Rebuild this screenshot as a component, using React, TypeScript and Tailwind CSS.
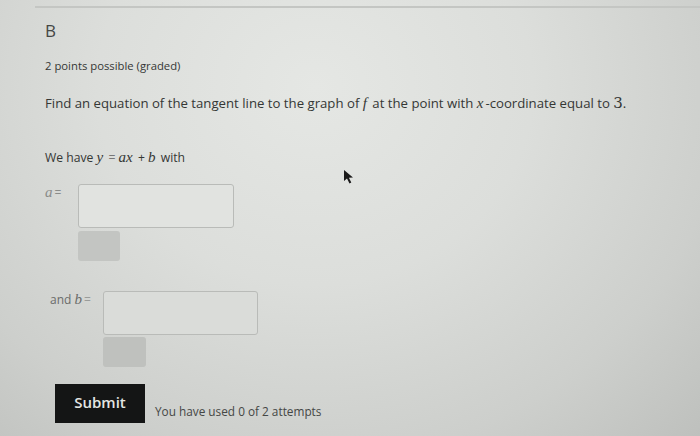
import React from "react";

const M = ({ children }: { children: React.ReactNode }) => (
  <span className="italic text-[15px] mr-[2px]" style={{ fontFamily: '"Liberation Serif", "DejaVu Serif", serif' }}>
    {children}
  </span>
);

export default function App() {
  return (
    <div
      className="relative w-[700px] h-[436px] overflow-hidden text-[#353735] bg-[radial-gradient(ellipse_at_45%_20%,#e5e7e4_0%,#dcdedb_40%,#cdcfcc_75%,#bec0bd_100%)]"
      style={{ fontFamily: '"Open Sans", Inter, sans-serif' }}
    >
      <div className="ml-[35px] mt-[6px] h-[2px] bg-[#c4c6c3]" />
      <div className="pl-[45px] pt-[13px]">
        <div className="text-[17px] leading-[20px] text-[#454745]">B</div>
        <div className="mt-[18px] text-[11.3px] leading-[14px]">2 points possible (graded)</div>
        <div className="mt-[21px] text-[13.2px] leading-[18px]">
          Find an equation of the tangent line to the graph of <M>f</M> at the point with <M>x</M>-coordinate equal to{" "}
          <span className="text-[15px]" style={{ fontFamily: '"DejaVu Serif", serif' }}>3</span>.
        </div>
        <div className="mt-[36px] text-[12.2px] leading-[18px]">
          We have <M>y</M> <span className="text-[#777]">=</span> <M>ax</M> <span>+</span> <M>b</M> with
        </div>
        <div className="mt-[17px] flex items-start">
          <div className="w-[33px] -mt-[3px] text-[12px] text-[#8a8c8a]"><M>a</M>=</div>
          <div className="flex flex-col gap-[3px]">
            <div className="w-[156px] h-[44px] rounded-[3px] border border-[#b9bbb8] bg-[#e1e3e0]" />
            <div className="w-[42px] h-[30px] rounded-[3px] bg-[#c3c5c2]" />
          </div>
        </div>
        <div className="mt-[30px] flex items-start">
          <div className="w-[58px] -mt-[3px] pl-[5px] text-[12px] text-[#6a6c6a]">and <M>b</M><span className="text-[#9a9c9a]">=</span></div>
          <div className="flex flex-col gap-[2px]">
            <div className="w-[155px] h-[44px] rounded-[3px] border border-[#b9bbb8] bg-[#dadcd9]" />
            <div className="w-[43px] h-[30px] rounded-[3px] bg-[#bfc1be]" />
          </div>
        </div>
        <div className="mt-[17px] ml-[10px] flex items-end gap-[10px]">
          <div className="w-[90px] h-[39px] bg-[#141515] text-[#e4e6e3] text-[15px] font-semibold flex items-center justify-center pb-[3px]">
            Submit
          </div>
          <div className="text-[11.8px] leading-[14px] pb-[5px] text-[#454745]">You have used 0 of 2 attempts</div>
        </div>
      </div>
      <svg className="absolute left-[343px] top-[169px]" width="12" height="16" viewBox="0 0 12 16">
        <path d="M1 1 L1 12 L4 9.5 L6.5 14.5 L8.3 13.6 L5.9 8.8 L10 8.6 Z" fill="#1a1a1a" />
      </svg>
    </div>
  );
}
